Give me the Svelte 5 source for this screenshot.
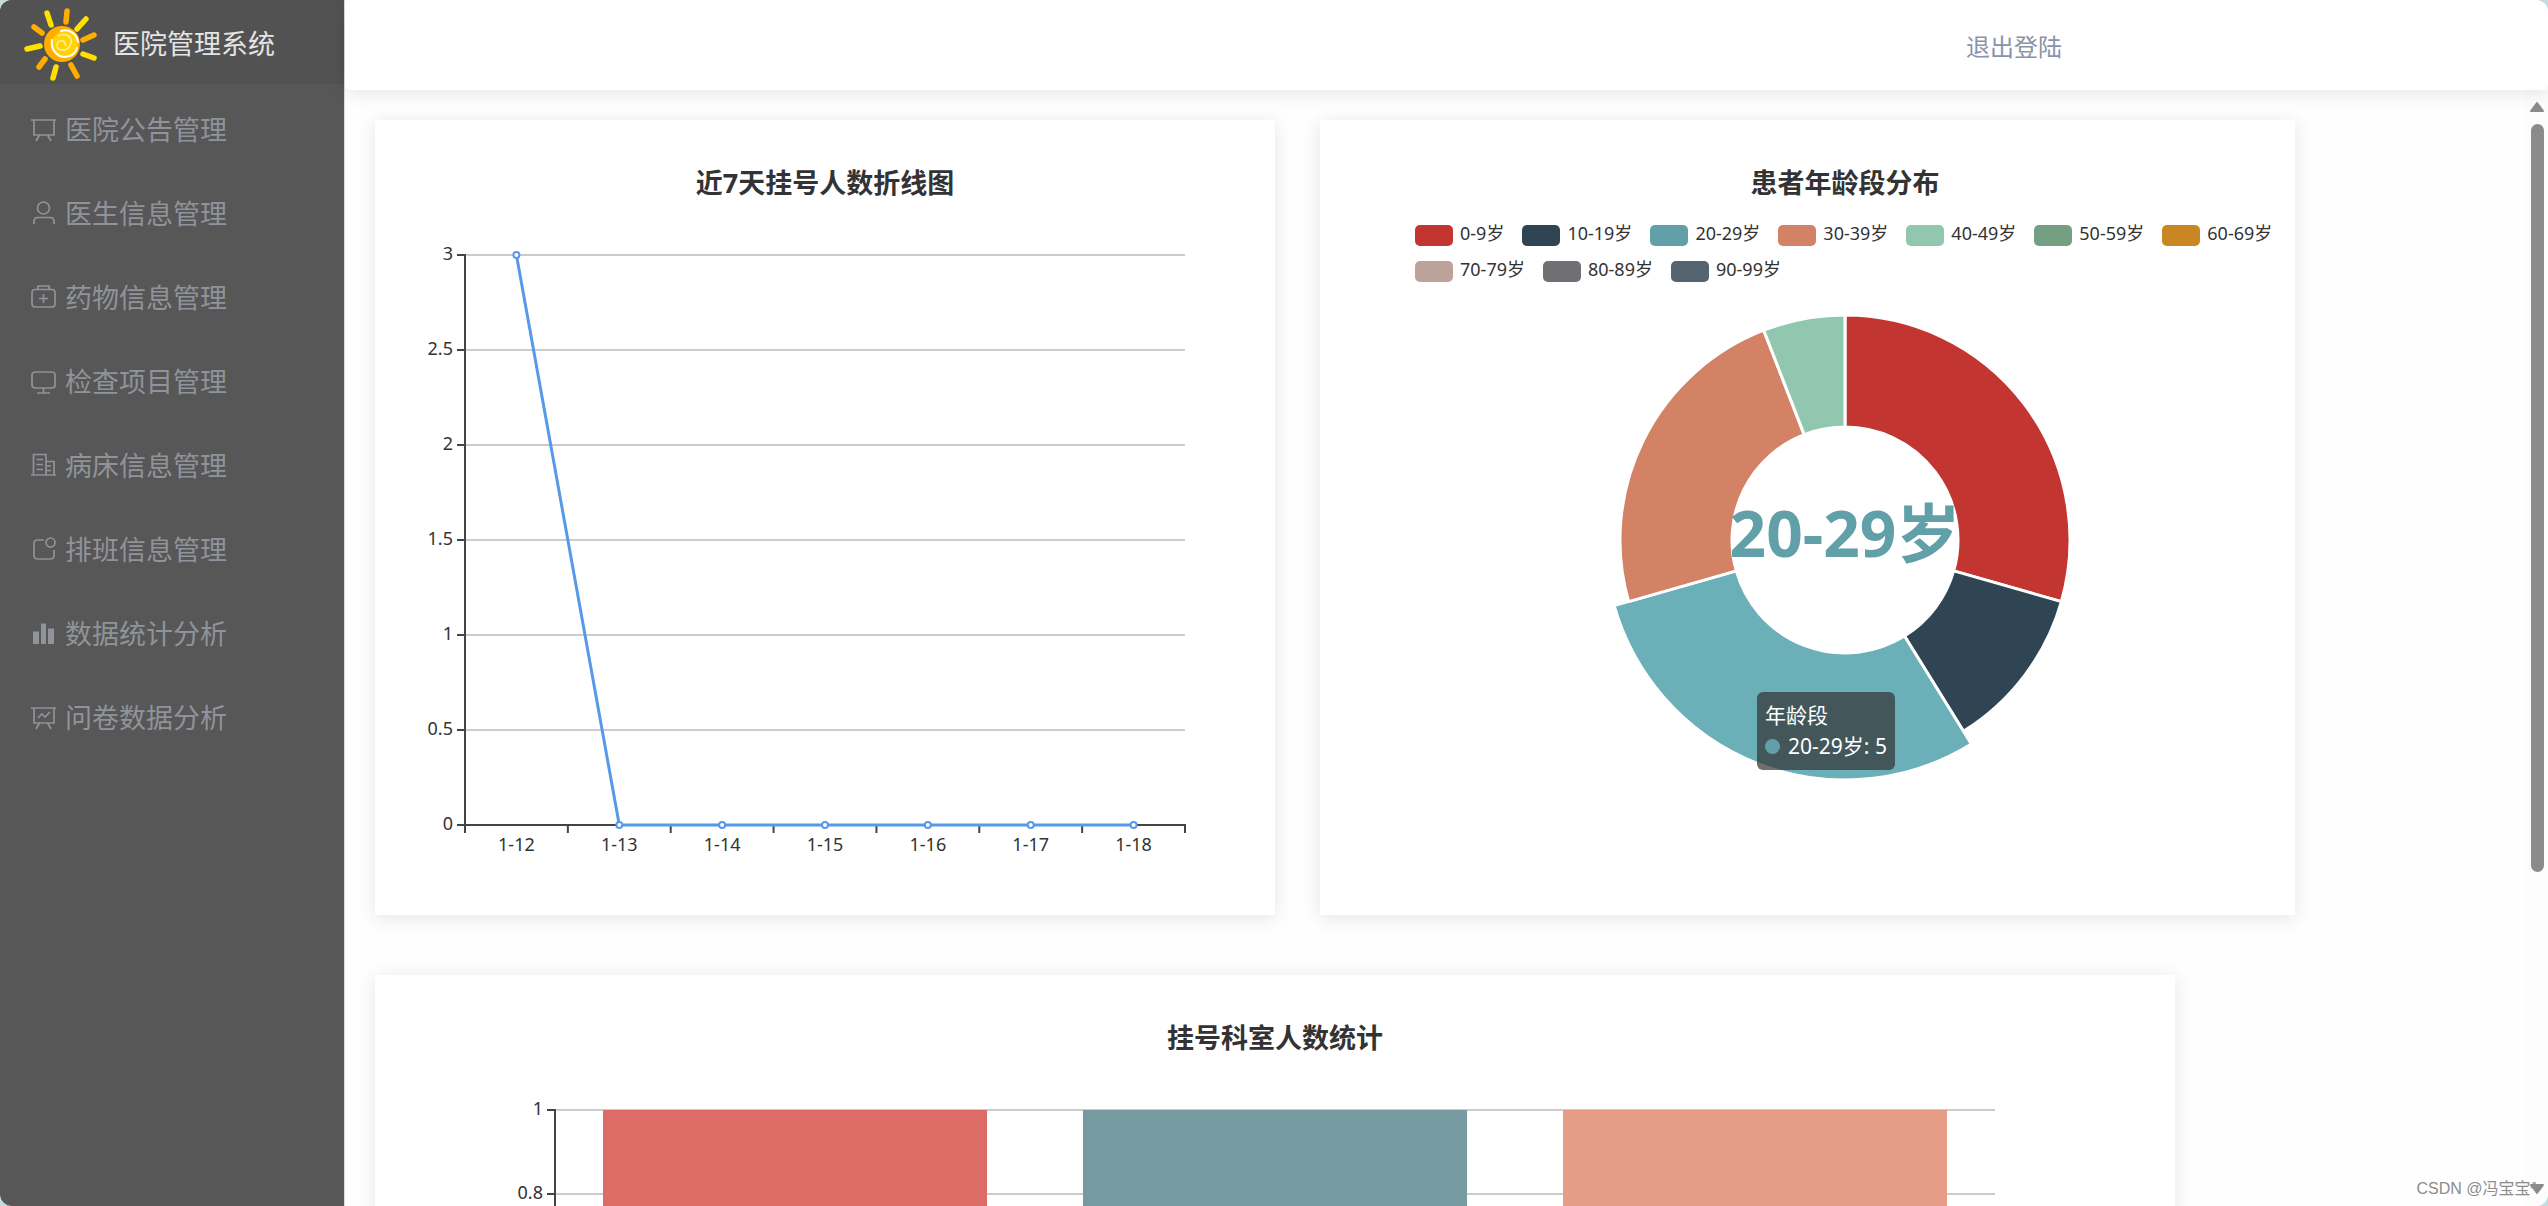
<script>
  const menu = [
    { icon: 'board', label: '医院公告管理' },
    { icon: 'user', label: '医生信息管理' },
    { icon: 'firstaid', label: '药物信息管理' },
    { icon: 'monitor', label: '检查项目管理' },
    { icon: 'office', label: '病床信息管理' },
    { icon: 'badge', label: '排班信息管理' },
    { icon: 'bars', label: '数据统计分析' },
    { icon: 'analysis', label: '问卷数据分析' }
  ];

  // Line chart: registrations over the last 7 days
  const days = ['1-12', '1-13', '1-14', '1-15', '1-16', '1-17', '1-18'];
  const counts = [3, 0, 0, 0, 0, 0, 0];
  const lineTicks = [0, 0.5, 1, 1.5, 2, 2.5, 3];
  const dayX = (i) => 90 + (720 / days.length) * (i + 0.5);
  const countY = (v) => 624 - (v / 3) * 570;
  const linePoints = counts.map((v, i) => `${dayX(i)},${countY(v)}`).join(' ');

  // Pie chart: patients per age group
  const ages = [
    { name: '0-9岁', value: 5, color: '#c23531' },
    { name: '10-19岁', value: 2, color: '#2f4554' },
    { name: '20-29岁', value: 5, color: '#61a0a8', active: true },
    { name: '30-39岁', value: 4, color: '#d48265' },
    { name: '40-49岁', value: 1, color: '#91c7ae' },
    { name: '50-59岁', value: 0, color: '#749f83' },
    { name: '60-69岁', value: 0, color: '#ca8622' },
    { name: '70-79岁', value: 0, color: '#bda29a' },
    { name: '80-89岁', value: 0, color: '#6e7074' },
    { name: '90-99岁', value: 0, color: '#546570' }
  ];
  const total = ages.reduce((sum, a) => sum + a.value, 0);
  const cx = 525;
  const cy = 258;

  function point(angle, r) {
    return `${cx + r * Math.sin(angle)} ${cy - r * Math.cos(angle)}`;
  }

  function sector(from, to, inner, outer) {
    const large = to - from > Math.PI ? 1 : 0;
    return `M${point(from, outer)}A${outer} ${outer} 0 ${large} 1 ${point(to, outer)}L${point(to, inner)}A${inner} ${inner} 0 ${large} 0 ${point(from, inner)}Z`;
  }

  let angle = 0;
  const slices = ages
    .filter((a) => a.value > 0)
    .map((a) => {
      const from = angle;
      angle += (a.value / total) * Math.PI * 2;
      return {
        d: sector(from, angle, 113, a.active ? 240 : 225),
        fill: a.active ? '#6bb0b9' : a.color
      };
    });

  // Bar chart: registrations per department
  const bars = ['#dd6b66', '#759aa0', '#e69d87'];
  const barTicks = [0, 0.2, 0.4, 0.6, 0.8, 1];
  const barY = (v) => 474 - v * 420;
</script>

<div class="app">
  <aside>
    <div class="brand">
      <svg class="sun" viewBox="0 0 76 76" aria-hidden="true">
        <g fill="none" stroke-width="5.5" stroke-linecap="round">
          <path stroke="#ffe100" d="M24 9l4 12M63 15L54 25M4 45l13-3M60 50l11 4M33 63l-3 11" />
          <path stroke="#ffae00" d="M44 7l-1 11M11 23l8 6M71 31l-11 5M48 61l6 11M22 55l-6 8" />
        </g>
        <circle cx="39" cy="40" r="18" fill="#ffae00" />
        <circle cx="42" cy="40" r="13" fill="#ffd400" />
        <path fill="none" stroke="#fff" stroke-width="2" stroke-linecap="round" d="M38 27c8-3 16 3 17 11M29 36c-2 9 5 17 13 17 6 0 11-4 12-9" />
        <path fill="none" stroke="#fff0a0" stroke-width="1.5" d="M35 32c7-4 15 1 13 7s-5 8-10 7-5-8-1-9 7 2 5 5" />
      </svg>
      <span>医院管理系统</span>
    </div>
    <nav>
      {#each menu as item}
        <a href="#{item.icon}">
          <svg class="icon" viewBox="0 0 27 27" aria-hidden="true">
            {#if item.icon === 'board' || item.icon === 'analysis'}
              <path d="M1 5h25M4 5v15h20V5M9.500 20l-3.500 6M17.500 20l3.500 6" />
              {#if item.icon === 'analysis'}
                <path d="M8 15l4-4 3 3 5-5" />
              {/if}
            {:else if item.icon === 'user'}
              <circle cx="13.5" cy="9" r="6" />
              <path d="M4 25v-2.500q0-4 4-4h12q4 0 4 4V25" />
            {:else if item.icon === 'firstaid'}
              <rect x="2" y="6.500" width="23" height="17.500" rx="3" />
              <path d="M8 6.500V3h11v3.500M13.500 11v9M9 15.500h9" />
            {:else if item.icon === 'monitor'}
              <rect x="2" y="5" width="23" height="16" rx="3" />
              <path d="M13.500 21v5M7 26h13" />
            {:else if item.icon === 'office'}
              <path d="M1 24h25M3.500 24V3.500H16V24M16 10.500h8V24M6.500 8.500H13M6.500 13.500H13M6.500 18.500H13M16 15h5M16 19.500h5" />
            {:else if item.icon === 'badge'}
              <path d="M14 5H7.500Q4 5 4 8.500v12Q4 24 7.500 24h13q3.500 0 3.500-3.500V15" />
              <circle cx="20.500" cy="7.500" r="4.500" />
            {:else}
              <path class="solid" d="M3 12.500h6V25H3zM11 4.500h5V25h-5zM18 9.500h6V25h-6z" />
            {/if}
          </svg>
          {item.label}
        </a>
      {/each}
    </nav>
  </aside>

  <div class="page">
    <header>
      <button type="button">退出登陆</button>
    </header>

    <div class="body">
      <main>
        <div class="row">
          <section class="card">
            <h2>近7天挂号人数折线图</h2>
            <svg class="chart" viewBox="0 0 900 714">
              {#each lineTicks as t}
                {#if t > 0}
                  <line class="grid" x1="90" x2="810" y1={countY(t)} y2={countY(t)} />
                {/if}
                <line class="axis" x1="82" x2="90" y1={countY(t)} y2={countY(t)} />
                <text x="78" y={countY(t) + 5} text-anchor="end">{t}</text>
              {/each}
              <path class="axis" d="M90 53V624H811" />
              {#each days as day, i}
                <line class="axis" x1={90 + (720 / 7) * i} x2={90 + (720 / 7) * i} y1="624" y2="632" />
                <text x={dayX(i)} y="650" text-anchor="middle">{day}</text>
              {/each}
              <line class="axis" x1="810" x2="810" y1="624" y2="632" />
              <polyline class="series" points={linePoints} />
              {#each counts as v, i}
                <circle class="dot" cx={dayX(i)} cy={countY(v)} r="3" />
              {/each}
            </svg>
          </section>

          <section class="card">
            <h2 class="shifted">患者年龄段分布</h2>
            <ul class="legend">
              {#each ages as age}
                <li><i style="background: {age.color}"></i><span>{age.name}</span></li>
              {/each}
            </ul>
            <svg class="chart" viewBox="0 0 975 633">
              {#each slices as s}
                <path class="slice" d={s.d} fill={s.fill} />
              {/each}
              <text class="center-label" x={cx} y="275" text-anchor="middle">20-29岁</text>
            </svg>
            <div class="tooltip">
              <div>年龄段</div>
              <div class="tip-row"><i></i>20-29岁: 5</div>
            </div>
          </section>
        </div>

        <section class="card wide">
          <h2>挂号科室人数统计</h2>
          <svg class="chart" viewBox="0 0 1800 564">
            {#each barTicks as t}
              <line class="grid" x1="180" x2="1620" y1={barY(t)} y2={barY(t)} />
              <line class="axis" x1="172" x2="180" y1={barY(t)} y2={barY(t)} />
              <text x="168" y={barY(t) + 5} text-anchor="end">{t}</text>
            {/each}
            <path class="axis" d="M180 53V474H1620" />
            {#each bars as color, i}
              <rect x={228 + 480 * i} y="54" width="384" height="420" fill={color} />
            {/each}
          </svg>
        </section>
      </main>

      <div class="scrollbar">
        <svg viewBox="0 0 22 34" aria-hidden="true"><path d="M11 13L17 21H5Z" /></svg>
        <div class="thumb"></div>
        <svg viewBox="0 0 22 34" aria-hidden="true"><path d="M5 13H17L11 21Z" /></svg>
      </div>
    </div>
  </div>

  <div class="watermark">CSDN @冯宝宝^</div>
</div>

<style>
  :global(body) {
    margin: 0;
    background: #c5dcde;
  }

  .app {
    position: relative;
    display: flex;
    height: 100vh;
    overflow: hidden;
    border-radius: 12px;
    background: #fefefe;
    color: #333;
    font-family: 'Noto Sans', 'Noto Sans CJK SC', sans-serif;
  }

  aside {
    flex: none;
    width: 344px;
    border-right: 1px solid #dcdcdc;
    background: #575757;
  }

  .brand {
    display: flex;
    align-items: center;
    gap: 14px;
    height: 84px;
    padding-left: 23px;
    background: #525252;
    color: #e4e4e4;
    font-size: 27px;
  }

  .sun {
    width: 76px;
    height: 76px;
    overflow: visible;
  }

  nav {
    padding-top: 2px;
  }

  nav a {
    display: flex;
    align-items: center;
    gap: 8px;
    height: 84px;
    padding-left: 30px;
    color: #909399;
    font-size: 27px;
    text-decoration: none;
  }

  .icon {
    width: 27px;
    height: 27px;
    fill: none;
    stroke: #909399;
    stroke-width: 1.7;
  }

  .solid {
    fill: #909399;
    stroke: none;
  }

  .page {
    display: flex;
    flex: 1;
    flex-direction: column;
    min-width: 0;
  }

  header {
    z-index: 1;
    display: flex;
    flex: none;
    align-items: center;
    justify-content: flex-end;
    height: 90px;
    padding-right: 486px;
    border-radius: 6px;
    background: #fff;
    box-shadow: 0 3px 18px rgba(0, 0, 0, 0.1);
  }

  header button {
    padding: 0;
    border: 0;
    background: none;
    color: #8a93a9;
    font-family: inherit;
    font-size: 24px;
  }

  .body {
    display: flex;
    flex: 1;
    min-height: 0;
  }

  main {
    flex: 1;
    min-width: 0;
    padding: 30px 0 0 30px;
    overflow-y: auto;
    scrollbar-width: none;
  }

  .row {
    display: grid;
    grid-template-columns: 12fr 13fr;
    gap: 45px;
    margin: 0 231px 60px 0;
  }

  .card {
    position: relative;
    padding-top: 45px;
    background: #fff;
    box-shadow: 0 3px 18px rgba(0, 0, 0, 0.1);
  }

  .wide {
    margin-right: 351px;
  }

  h2 {
    margin: 0;
    font-size: 27px;
    font-weight: 700;
    line-height: 36px;
    text-align: center;
  }

  .shifted {
    padding-left: 75px;
  }

  .chart {
    display: block;
    width: 100%;
    height: auto;
  }

  .chart text {
    fill: #333;
    font-size: 18px;
  }

  .grid {
    stroke: #ccc;
    stroke-width: 2;
  }

  .axis {
    fill: none;
    stroke: #444;
    stroke-width: 2;
  }

  .series {
    fill: none;
    stroke: #5799e9;
    stroke-width: 3;
    stroke-linejoin: bevel;
  }

  .dot {
    fill: #fff;
    stroke: #5799e9;
    stroke-width: 2;
  }

  .slice {
    stroke: #fff;
    stroke-width: 3;
    stroke-linejoin: bevel;
  }

  .chart .center-label {
    fill: #61a0a8;
    font-size: 64px;
    font-weight: 700;
  }

  .legend {
    display: flex;
    flex-wrap: wrap;
    gap: 15px 18px;
    margin: 24px 0 0 95px;
    padding: 0;
    list-style: none;
    font-size: 18px;
    line-height: 16px;
  }

  .legend li {
    display: flex;
    gap: 7px;
    height: 21px;
  }

  .legend i {
    width: 38px;
    height: 21px;
    border-radius: 5px;
  }

  .tooltip {
    position: absolute;
    top: 572px;
    left: 437px;
    padding: 8px;
    border-radius: 6px;
    background: rgba(50, 50, 50, 0.7);
    color: #fff;
    font-size: 21px;
    line-height: 31px;
    white-space: nowrap;
  }

  .tip-row {
    display: flex;
    align-items: center;
    gap: 8px;
  }

  .tip-row i {
    width: 15px;
    height: 15px;
    border-radius: 50%;
    background: #61a0a8;
  }

  .scrollbar {
    display: flex;
    flex: none;
    flex-direction: column;
    align-items: center;
    width: 22px;
    background: #fcfcfc;
  }

  .scrollbar svg {
    flex: none;
    width: 22px;
    height: 34px;
    fill: #8b8b8b;
    stroke: #8b8b8b;
    stroke-width: 2;
    stroke-linejoin: round;
  }

  .scrollbar svg:last-child {
    margin-top: auto;
  }

  .thumb {
    width: 13px;
    height: 67%;
    border-radius: 7px;
    background: #8b8b8b;
  }

  .watermark {
    position: absolute;
    right: 10px;
    bottom: 7px;
    color: #8c8c8c;
    font-family: 'Liberation Sans', 'Noto Sans CJK SC', sans-serif;
    font-size: 16px;
  }
</style>
